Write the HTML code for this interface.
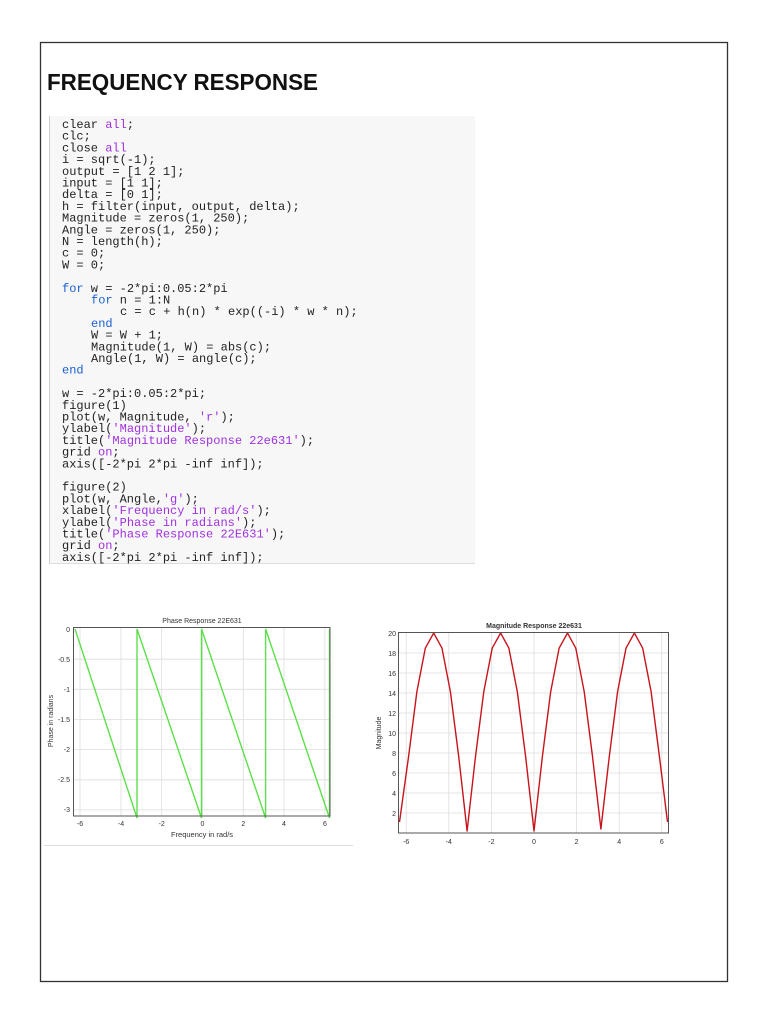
<!DOCTYPE html>
<html><head><meta charset="utf-8"><style>
html,body{margin:0;padding:0;background:#fff;width:768px;height:1024px;overflow:hidden}
svg{display:block}
.c{font-family:"Liberation Mono",monospace;font-size:12px;fill:#222;white-space:pre}
.k{fill:#1a5fd0}.s{fill:#a030e0}
.t{font-family:"Liberation Sans",sans-serif;font-size:7px;fill:#333}
</style></head><body>
<svg width="768" height="1024" viewBox="0 0 768 1024" xmlns="http://www.w3.org/2000/svg" xml:space="preserve">
<rect x="40.5" y="42.5" width="687" height="939" fill="#fff" stroke="#333" stroke-width="1.3"/>
<text x="47" y="90" font-family="Liberation Sans,sans-serif" font-weight="bold" font-size="23" textLength="271" lengthAdjust="spacingAndGlyphs" fill="#111">FREQUENCY RESPONSE</text>
<rect x="49" y="116" width="426" height="447" fill="#f7f7f7"/>
<line x1="49.5" y1="116" x2="49.5" y2="563" stroke="#ccc"/>
<line x1="49" y1="563.5" x2="475" y2="563.5" stroke="#ddd"/>
<g class="c">
<text x="62" y="128">clear <tspan class="s">all</tspan>;</text>
<text x="62" y="139.7">clc;</text>
<text x="62" y="151.4">close <tspan class="s">all</tspan></text>
<text x="62" y="163.1">i = sqrt(-1);</text>
<text x="62" y="174.8">output = [1 2 1];</text>
<text x="62" y="186.5">input = [1 1];</text>
<text x="62" y="198.2">delta = [0 1];</text>
<text x="62" y="209.9">h = filter(input, output, delta);</text>
<text x="62" y="221.6">Magnitude = zeros(1, 250);</text>
<text x="62" y="233.3">Angle = zeros(1, 250);</text>
<text x="62" y="245">N = length(h);</text>
<text x="62" y="256.7">c = 0;</text>
<text x="62" y="268.4">W = 0;</text>
<text x="62" y="291.8"><tspan class="k">for</tspan> w = -2*pi:0.05:2*pi</text>
<text x="91" y="303.5"><tspan class="k">for</tspan> n = 1:N</text>
<text x="120" y="315.2">c = c + h(n) * exp((-i) * w * n);</text>
<text x="91" y="326.9"><tspan class="k">end</tspan></text>
<text x="91" y="338.6">W = W + 1;</text>
<text x="91" y="350.3">Magnitude(1, W) = abs(c);</text>
<text x="91" y="362">Angle(1, W) = angle(c);</text>
<text x="62" y="373.7"><tspan class="k">end</tspan></text>
<text x="62" y="397.1">w = -2*pi:0.05:2*pi;</text>
<text x="62" y="408.8">figure(1)</text>
<text x="62" y="420.5">plot(w, Magnitude, <tspan class="s">'r'</tspan>);</text>
<text x="62" y="432.2">ylabel(<tspan class="s">'Magnitude'</tspan>);</text>
<text x="62" y="443.9">title(<tspan class="s">'Magnitude Response 22e631'</tspan>);</text>
<text x="62" y="455.6">grid <tspan class="s">on</tspan>;</text>
<text x="62" y="467.3">axis([-2*pi 2*pi -inf inf]);</text>
<text x="62" y="490.7">figure(2)</text>
<text x="62" y="502.4">plot(w, Angle,<tspan class="s">'g'</tspan>);</text>
<text x="62" y="514.1">xlabel(<tspan class="s">'Frequency in rad/s'</tspan>);</text>
<text x="62" y="525.8">ylabel(<tspan class="s">'Phase in radians'</tspan>);</text>
<text x="62" y="537.5">title(<tspan class="s">'Phase Response 22E631'</tspan>);</text>
<text x="62" y="549.2">grid <tspan class="s">on</tspan>;</text>
<text x="62" y="560.9">axis([-2*pi 2*pi -inf inf]);</text>
</g>

<g stroke="#ddd" stroke-width="0.8">
<line x1="80" y1="627" x2="80" y2="816"/><line x1="121" y1="627" x2="121" y2="816"/><line x1="161.7" y1="627" x2="161.7" y2="816"/><line x1="202.5" y1="627" x2="202.5" y2="816"/><line x1="243.3" y1="627" x2="243.3" y2="816"/><line x1="284" y1="627" x2="284" y2="816"/><line x1="324.9" y1="627" x2="324.9" y2="816"/>
<line x1="74" y1="659.2" x2="330" y2="659.2"/><line x1="74" y1="689.3" x2="330" y2="689.3"/><line x1="74" y1="719.5" x2="330" y2="719.5"/><line x1="74" y1="749.6" x2="330" y2="749.6"/><line x1="74" y1="779.8" x2="330" y2="779.8"/><line x1="74" y1="809.9" x2="330" y2="809.9"/>
</g>
<polyline fill="none" stroke="#5ce04a" stroke-width="1.4" points="75,629 137,818 137,629 201.5,818 201.5,629 265.6,818 265.6,629 329.5,818 329.5,629"/>
<rect x="73.5" y="627.5" width="256.5" height="188.5" fill="none" stroke="#555" stroke-width="1"/>
<text class="t" x="202" y="623" text-anchor="middle" font-size="7.5">Phase Response 22E631</text>
<g class="t" text-anchor="end">
<text x="70" y="632">0</text><text x="70" y="662">-0.5</text><text x="70" y="692">-1</text><text x="70" y="722">-1.5</text><text x="70" y="752">-2</text><text x="70" y="782">-2.5</text><text x="70" y="812">-3</text>
</g>
<g class="t" text-anchor="middle">
<text x="80" y="826">-6</text><text x="121" y="826">-4</text><text x="161.7" y="826">-2</text><text x="202.5" y="826">0</text><text x="243.3" y="826">2</text><text x="284" y="826">4</text><text x="324.9" y="826">6</text>
<text x="202" y="837" font-size="7.5">Frequency in rad/s</text>
</g>
<text class="t" transform="translate(53,721) rotate(-90)" text-anchor="middle" font-size="7.5">Phase in radians</text>
<line x1="44" y1="845.5" x2="353" y2="845.5" stroke="#ddd"/>

<g stroke="#ddd" stroke-width="0.8">
<line x1="406.2" y1="632" x2="406.2" y2="833"/><line x1="448.8" y1="632" x2="448.8" y2="833"/><line x1="491.4" y1="632" x2="491.4" y2="833"/><line x1="534" y1="632" x2="534" y2="833"/><line x1="576.6" y1="632" x2="576.6" y2="833"/><line x1="619.2" y1="632" x2="619.2" y2="833"/><line x1="661.8" y1="632" x2="661.8" y2="833"/>
<line x1="399" y1="653" x2="668" y2="653"/><line x1="399" y1="673" x2="668" y2="673"/><line x1="399" y1="693" x2="668" y2="693"/><line x1="399" y1="713" x2="668" y2="713"/><line x1="399" y1="733" x2="668" y2="733"/><line x1="399" y1="753" x2="668" y2="753"/><line x1="399" y1="773" x2="668" y2="773"/><line x1="399" y1="793" x2="668" y2="793"/><line x1="399" y1="813" x2="668" y2="813"/>
</g>
<polyline fill="none" stroke="#c8141c" stroke-width="1.4" stroke-linejoin="round" points="399.5,822 408.6,756.4 416.9,691.6 425.3,648.2 433.7,633 442,648.2 450.4,691.6 458.7,756.4 467.1,831 475.5,756.4 483.8,691.6 492.2,648.2 500.6,633 508.9,648.2 517.3,691.6 525.6,756.4 534,831 542.4,756.4 550.7,691.6 559.1,648.2 567.5,633 575.8,648.2 584.2,691.6 592.5,756.4 600.9,829 609.3,756.4 617.6,691.6 626,648.2 634.4,633 642.7,648.2 651.1,691.6 659.4,756.4 667.5,822"/>
<rect x="398.5" y="632.5" width="270" height="200.5" fill="none" stroke="#555" stroke-width="1"/>
<text class="t" x="534" y="628" text-anchor="middle" font-size="7.5" font-weight="bold">Magnitude Response 22e631</text>
<g class="t" text-anchor="end">
<text x="396" y="636">20</text><text x="396" y="656">18</text><text x="396" y="676">16</text><text x="396" y="696">14</text><text x="396" y="716">12</text><text x="396" y="736">10</text><text x="396" y="756">8</text><text x="396" y="776">6</text><text x="396" y="796">4</text><text x="396" y="816">2</text>
</g>
<g class="t" text-anchor="middle">
<text x="406.2" y="844">-6</text><text x="448.8" y="844">-4</text><text x="491.4" y="844">-2</text><text x="534" y="844">0</text><text x="576.6" y="844">2</text><text x="619.2" y="844">4</text><text x="661.8" y="844">6</text>
</g>
<text class="t" transform="translate(381,733) rotate(-90)" text-anchor="middle" font-size="7.5">Magnitude</text>
</svg>
</body></html>
